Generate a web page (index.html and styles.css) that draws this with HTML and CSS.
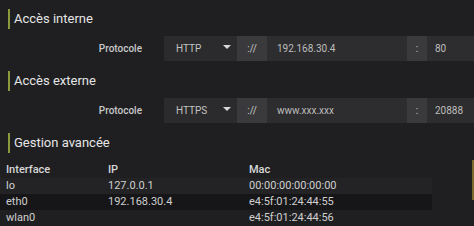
FILE: index.html
```html
<!DOCTYPE html>
<html lang="fr">
<head>
    <meta charset="UTF-8">
    <meta name="viewport" content="width=device-width, initial-scale=1.0">
    <title>Accès</title>
    <link rel="stylesheet" href="styles.css">
</head>
<body>
    <div class="section">
        <h2 class="section-title">Accès interne</h2>
        <div class="row">
            <label class="row-label">Protocole</label>
            <div class="select">
                <span>HTTP</span>
                <span class="caret"></span>
            </div>
            <div class="addon">://</div>
            <div class="input">192.168.30.4</div>
            <div class="addon colon">:</div>
            <div class="input port">80</div>
        </div>
    </div>

    <div class="section">
        <h2 class="section-title">Accès externe</h2>
        <div class="row">
            <label class="row-label">Protocole</label>
            <div class="select">
                <span>HTTPS</span>
                <span class="caret"></span>
            </div>
            <div class="addon">://</div>
            <div class="input">www.xxx.xxx</div>
            <div class="addon colon">:</div>
            <div class="input port">20888</div>
        </div>
    </div>

    <div class="section">
        <h2 class="section-title">Gestion avancée</h2>
        <table class="iface-table">
            <thead>
                <tr>
                    <th class="col-name">Interface</th>
                    <th class="col-ip">IP</th>
                    <th>Mac</th>
                </tr>
            </thead>
            <tbody>
                <tr class="alt">
                    <td>lo</td>
                    <td>127.0.0.1</td>
                    <td>00:00:00:00:00:00</td>
                </tr>
                <tr class="selected">
                    <td>eth0</td>
                    <td>192.168.30.4</td>
                    <td>e4:5f:01:24:44:55</td>
                </tr>
                <tr>
                    <td>wlan0</td>
                    <td></td>
                    <td>e4:5f:01:24:44:56</td>
                </tr>
            </tbody>
        </table>
    </div>

    <div class="scroll-thumb"></div>
</body>
</html>
```

FILE: styles.css
```css
body {
    font-family: Roboto, "Liberation Sans", sans-serif;
    margin: 0;
    padding: 9px 0 0;
    background: #1f1f21;
    color: #d0d0d0;
    overflow: hidden;
}
.section-title {
    margin: 0 0 7px 8px;
    padding-left: 4px;
    border-left: 2px solid #8a9a3c;
    font-size: 13px;
    font-weight: 400;
    line-height: 20px;
    color: #e6e6e6;
}
.row {
    display: flex;
    height: 25px;
    margin-bottom: 10px;
    font-size: 10px;
    line-height: 25px;
}
.row-label {
    width: 142px;
    margin-right: 22px;
    text-align: right;
    font-size: 10px;
    font-weight: 500;
    color: #c8c8c8;
}
.select {
    display: flex;
    justify-content: space-between;
    align-items: center;
    width: 73px;
    padding: 0 6px 0 12px;
    box-sizing: border-box;
    background: #2b2b2d;
    color: #c4c4c4;
}
.caret {
    width: 0;
    height: 0;
    margin-top: -3px;
    border-left: 4px solid transparent;
    border-right: 4px solid transparent;
    border-top: 4px solid #d8d8d8;
}
.addon {
    width: 30px;
    text-align: center;
    background: #3a3a3c;
    color: #c8c8c8;
}
.addon.colon {
    width: 20px;
}
.input {
    flex: 1;
    padding-left: 10px;
    background: #2d2d2f;
    color: #bdbdbd;
}
.input.port {
    flex: 0 0 39px;
    padding-left: 8px;
}
.iface-table {
    width: 432px;
    margin-top: 9px;
    border-collapse: collapse;
    font-size: 11px;
}
.iface-table th,
.iface-table td {
    height: 16px;
    padding: 0 0 0 6px;
    text-align: left;
    line-height: 16px;
}
.iface-table th {
    font-weight: 500;
    color: #d8d8d8;
}
.iface-table td {
    color: #cfcfcf;
}
.col-name {
    width: 96px;
}
.col-ip {
    width: 135px;
}
.iface-table tr.alt {
    background: #232325;
}
.iface-table tr.selected {
    background: #161618;
}
.scroll-thumb {
    position: absolute;
    top: 160px;
    right: 0;
    width: 2px;
    height: 40px;
    background: #7a6a2c;
}
```
